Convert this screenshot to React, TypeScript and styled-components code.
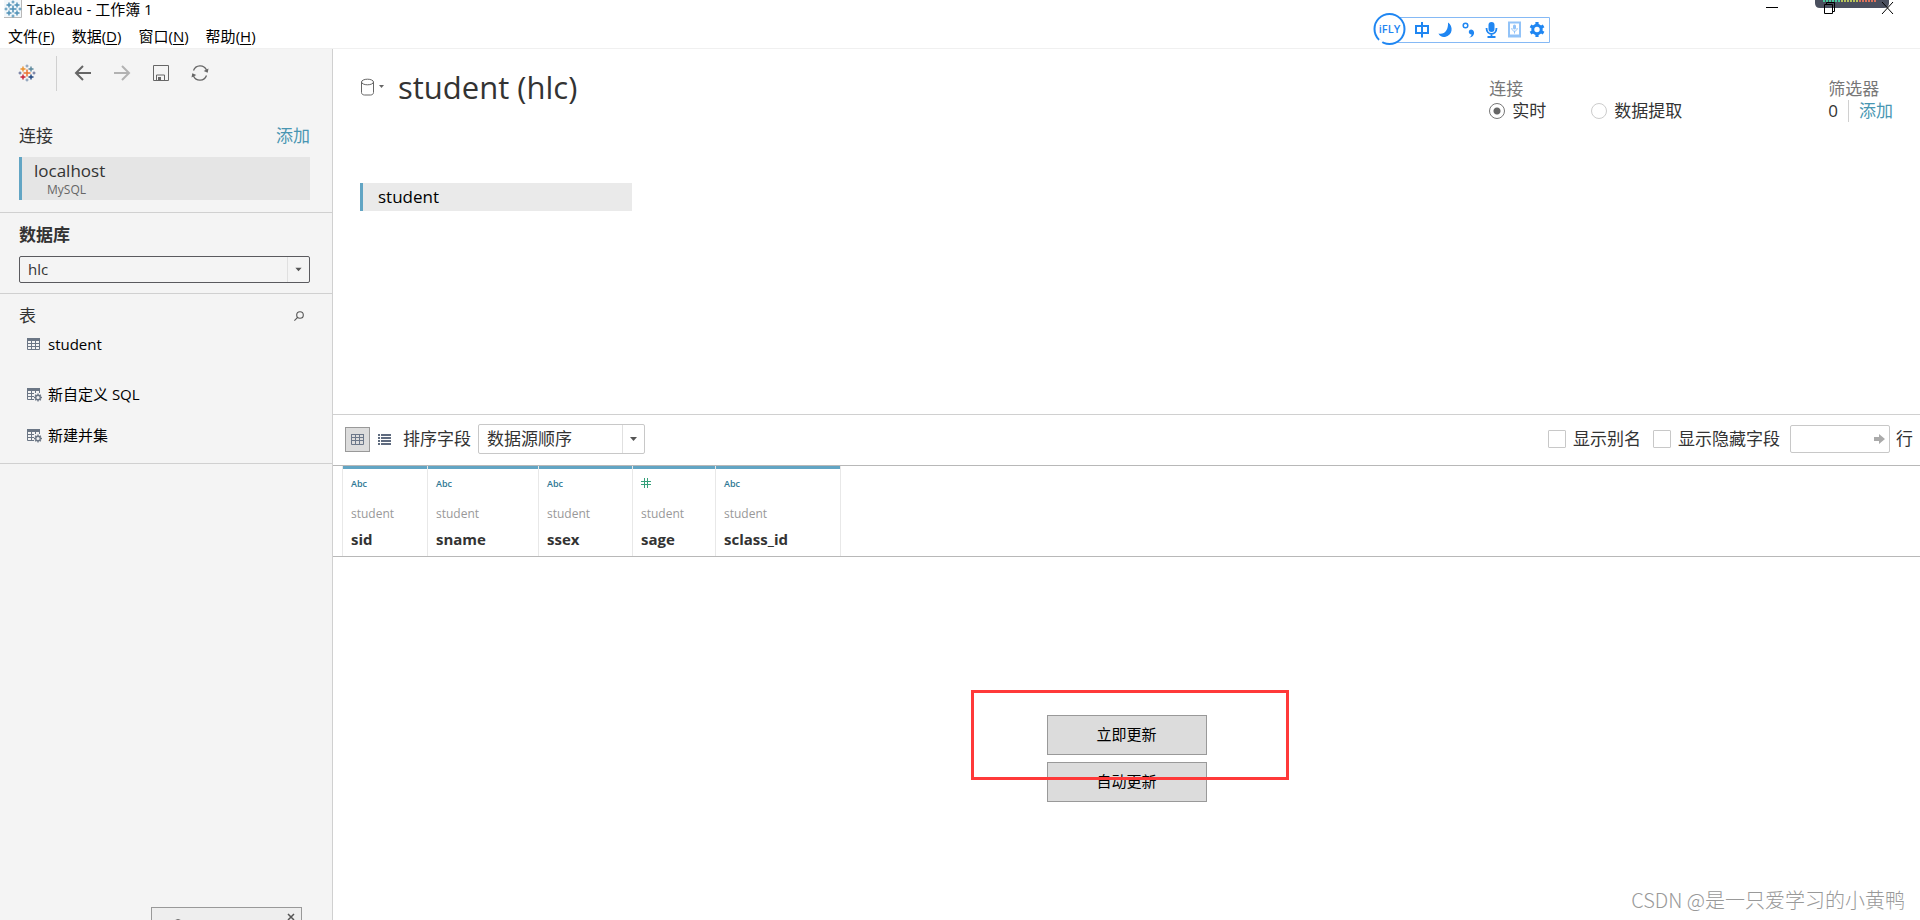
import React from "react";
import styled, { createGlobalStyle } from "styled-components";

const accent = "#62a5c4";
const link = "#4996b2";
const line = "#d0d0d0";
const ink = "#333";

const GlobalStyle = createGlobalStyle`
  *, *::before, *::after { box-sizing: border-box; }
  body {
    margin: 0;
    background: #fff;
    color: ${ink};
    font-family: "Open Sans", "Noto Sans CJK SC", sans-serif;
    font-size: 16px;
    line-height: 24px;
  }
  button, input, select { font: inherit; color: inherit; margin: 0; }
  button { padding: 0; border: 0; background: none; }
  h1, h2, p { margin: 0; font-weight: 400; }
  a { color: ${link}; text-decoration: none; }
  svg { display: block; flex: none; }
`;

const Page = styled.div`
  height: 100vh;
  display: flex;
  flex-direction: column;
  overflow: hidden;
`;

const WindowHeader = styled.header`
  position: relative;
  flex: none;
  height: 49px;
  border-bottom: 1px solid #f0f0f0;
  color: #000;
`;

const TitleRow = styled.div`
  display: flex;
  align-items: center;
  gap: 5px;
  height: 17px;
  padding-left: 4px;
  font-size: 15px;
  line-height: 16px;
`;

const MenuBar = styled.nav`
  display: flex;
  gap: 17px;
  height: 30px;
  padding: 8px 8px 0;
  font-size: 15px;
  line-height: 22px;
  button { height: 22px; }
  u { text-underline-offset: 2px; }
`;

const WindowControls = styled.div`
  position: absolute;
  top: 0;
  right: 26px;
  display: flex;
  gap: 45px;
`;

const HiddenWidget = styled.div`
  position: absolute;
  top: 0;
  right: 31px;
`;

const ImeBar = styled.div`
  position: absolute;
  top: 12px;
  right: 369px;
`;

const Workspace = styled.div`
  flex: 1;
  min-height: 0;
  display: flex;
`;

const Sidebar = styled.aside`
  position: relative;
  flex: none;
  width: 333px;
  background: #f4f4f4;
  border-right: 1px solid ${line};
`;

const Toolbar = styled.div`
  display: flex;
  align-items: center;
  gap: 21px;
  height: 64px;
  padding: 0 18px 16px;
  button { height: 18px; }
`;

const StartPage = styled.div`
  display: flex;
  align-items: center;
  width: 39px;
  height: 35px;
  margin-right: -4px;
  border-right: 1px solid ${line};
`;

const Separator = styled.i`
  width: 1px;
  height: 22px;
  background: ${line};
`;

const Section = styled.section<{ $top: number; $bottom: number }>`
  padding: ${(p) => p.$top}px 22px ${(p) => p.$bottom}px 19px;
  border-bottom: 1px solid ${line};
`;

const SectionHead = styled.div<{ $inset?: boolean }>`
  display: flex;
  justify-content: space-between;
  align-items: center;
  height: 24px;
  padding-right: ${(p) => (p.$inset ? 6 : 0)}px;
  font-size: 17px;
`;

const SectionTitle = styled.h2<{ $bold?: boolean }>`
  font-size: 17px;
  font-weight: ${(p) => (p.$bold ? 700 : 400)};
`;

const Connection = styled.button`
  display: block;
  width: 100%;
  height: 43px;
  margin-top: 9px;
  padding: 0 0 3px 12px;
  text-align: left;
  background: #e5e5e5;
  border-left: 3px solid ${accent};
  font-size: 17px;
  line-height: 26px;
  small {
    display: block;
    padding-left: 13px;
    color: #666;
    font-size: 12px;
    line-height: 12px;
  }
`;

const SelectBox = styled.div<{ $dark?: boolean }>`
  display: flex;
  position: relative;
  width: ${(p) => (p.$dark ? "100%" : "167px")};
  height: ${(p) => (p.$dark ? 27 : 30)}px;
  margin-top: ${(p) => (p.$dark ? 9 : 0)}px;
  border: 1px solid ${(p) => (p.$dark ? "#5a5a5e" : "#c8c8c8")};
  border-radius: 2px;
  font-size: ${(p) => (p.$dark ? 15 : 17)}px;
  select {
    appearance: none;
    width: 100%;
    padding: 0 24px 1px 8px;
    border: 0;
    background: none;
    outline: 0;
  }
  svg {
    position: absolute;
    right: 0;
    top: 0;
    height: 100%;
    width: 22px;
    border-left: 1px solid #e0e0e0;
    pointer-events: none;
  }
`;

const TableItem = styled.button<{ $gap: number }>`
  display: flex;
  align-items: center;
  gap: 6px;
  height: 24px;
  margin: ${(p) => p.$gap}px 0 0 8px;
  color: #000;
  font-size: 15px;
`;

const Popup = styled.div`
  position: absolute;
  left: 151px;
  bottom: -20px;
  width: 151px;
  height: 33px;
  border: 1px solid #999;
  background: #eee;
  display: flex;
  justify-content: space-between;
  padding: 5px 6px 0 22px;
  button { height: 8px; }
`;

const Main = styled.main`
  flex: 1;
  min-width: 0;
  display: flex;
  flex-direction: column;
`;

const Canvas = styled.section`
  flex: none;
  height: 366px;
  padding: 17px 27px 0;
  border-bottom: 1px solid ${line};
`;

const SourceHead = styled.div`
  display: flex;
  align-items: flex-start;
  height: 117px;
`;

const SourceMenu = styled.button`
  margin: 12px 12px 0 0;
`;

const SourceTitle = styled.h1`
  flex: 1;
  font-size: 31px;
  line-height: 43px;
`;

const Options = styled.div<{ $end: number }>`
  display: flex;
  flex-direction: column;
  margin: 12px ${(p) => p.$end}px 0 0;
  font-size: 17px;
  line-height: 22px;
`;

const Caption = styled.span`
  color: #777;
`;

const OptionRow = styled.div<{ $gap: number }>`
  display: flex;
  align-items: center;
  gap: ${(p) => p.$gap}px;
`;

const Choice = styled.label`
  display: flex;
  align-items: center;
  gap: 7px;
`;

const Radio = styled.input.attrs({ type: "radio" })`
  appearance: none;
  width: 16px;
  height: 16px;
  border: 1px solid #ccc;
  border-radius: 50%;
  background: #fff;
  &:checked {
    border-color: #777;
    background: radial-gradient(circle, #666 3px, #fff 4px);
  }
`;

const Check = styled.input.attrs({ type: "checkbox" })`
  appearance: none;
  width: 18px;
  height: 18px;
  border: 1px solid #c8c8c8;
  border-radius: 1px;
  background: #fff;
`;

const TableNode = styled.button`
  width: 272px;
  height: 28px;
  padding-left: 15px;
  text-align: left;
  color: #000;
  background: #eaeaea;
  border-left: 3px solid ${accent};
  font-size: 17px;
`;

const GridToolbar = styled.div`
  flex: none;
  display: flex;
  align-items: center;
  height: 51px;
  padding: 0 7px 2px 12px;
  border-bottom: 1px solid #b8b8b8;
  font-size: 17px;
`;

const ViewButton = styled.button<{ $on?: boolean }>`
  display: grid;
  place-items: center;
  width: 25px;
  height: 25px;
  margin-right: ${(p) => (p.$on ? 2 : 6)}px;
  border: 1px solid ${(p) => (p.$on ? "#999" : "transparent")};
  background: ${(p) => (p.$on ? "#dcdcdc" : "transparent")};
`;

const SortLabel = styled.label`
  display: flex;
  align-items: center;
  gap: 7px;
  margin-right: auto;
`;

const CheckGroup = styled.div`
  display: flex;
  gap: 12px;
  margin-right: 10px;
`;

const RowCount = styled.label`
  display: flex;
  align-items: center;
  gap: 6px;
`;

const RowBox = styled.span`
  display: flex;
  align-items: center;
  width: 100px;
  height: 28px;
  padding-right: 4px;
  border: 1px solid #c8c8c8;
  border-radius: 2px;
  input {
    flex: 1;
    min-width: 0;
    height: 24px;
    padding: 0 6px;
    border: 0;
    outline: 0;
    background: none;
  }
`;

const GridHead = styled.div`
  flex: none;
  height: 91px;
  padding-left: 9px;
  border-bottom: 1px solid #b8b8b8;
`;

const FieldTable = styled.table`
  border-collapse: separate;
  border-spacing: 0;
  table-layout: fixed;
  width: 499px;
  height: 90px;
  border-left: 1px solid #e8e8e8;
`;

const Field = styled.th<{ $width: number }>`
  width: ${(p) => p.$width}px;
  padding: 0 0 0 8px;
  vertical-align: top;
  text-align: left;
  font-weight: 400;
  border-right: 1px solid #e8e8e8;
  background: linear-gradient(${accent}, ${accent}) 0 0 / 100% 3px no-repeat;
`;

const FieldType = styled.div`
  height: 36px;
  padding-top: 11px;
  color: #2f7894;
  font-size: 9px;
  font-weight: 600;
  line-height: 13px;
  svg { margin-top: 1px; }
`;

const FieldSource = styled.div`
  height: 24px;
  color: #999;
  font-size: 12px;
`;

const FieldName = styled.div`
  height: 28px;
  font-size: 15px;
  font-weight: 700;
  line-height: 26px;
`;

const Preview = styled.section`
  flex: 1;
  display: flex;
  flex-direction: column;
  align-items: center;
  padding-top: 133px;
`;

const Updates = styled.div`
  position: relative;
  width: 318px;
  display: flex;
  flex-direction: column;
  align-items: center;
  gap: 7px;
  padding-top: 25px;
`;

const UpdateButton = styled.button`
  width: 160px;
  height: 40px;
  padding-bottom: 2px;
  color: #000;
  background: #dcdcdc;
  border: 1px solid #999;
  font-size: 15px;
`;

const Highlight = styled.div`
  position: absolute;
  top: 0;
  left: 3px;
  width: 100%;
  height: 90px;
  border: 3px solid #ff3939;
  pointer-events: none;
`;

const Watermark = styled.p`
  position: absolute;
  right: 15px;
  bottom: 5px;
  color: #999;
  font-family: "Noto Sans CJK SC", sans-serif;
  font-size: 20px;
  font-weight: 300;
  line-height: 30px;
`;

function TableauLogo({ mono }: { mono?: boolean }) {
  const c = (v: string) => (mono ? "#4d8fb5" : v);
  return (
    <svg width="18" height="18" viewBox="0 0 18 18" fill="none" aria-hidden="true">
      {mono && <path d="M0 0h18v18H0z" fill="#f2f7fa" />}
      {mono && <path d="M0 17.500h17.500V0" stroke="#b8b8b8" />}
      <path d="M9 5.500v7M5.500 9h7" stroke={c("#eb7331")} strokeWidth="1.500" />
      <path d="M5 2.500v5M2.500 5h5" stroke={c("#eb912c")} strokeWidth="1.400" />
      <path d="M13 2.500v5M10.500 5h5" stroke={c("#59879b")} strokeWidth="1.400" />
      <path d="M5 10.500v5M2.500 13h5" stroke={c("#c72037")} strokeWidth="1.400" />
      <path d="M13 10.500v5M10.500 13h5" stroke={c("#1f447e")} strokeWidth="1.400" />
      <path d="M9 .5v3M7.500 2h3M9 14.500v3M7.500 16h3" stroke={c("#7b92b0")} />
      <path d="M2 7.500v3M.5 9h3M16 7.500v3M14.500 9h3" stroke={c("#5b6591")} />
    </svg>
  );
}

const Arrow = ({ forward }: { forward?: boolean }) => (
  <svg width="18" height="18" viewBox="0 0 18 18" fill="none" stroke={forward ? "#b2b2b2" : "#666"} strokeWidth="2">
    <path d={forward ? "M1 9h15M9 2l7 7-7 7" : "M17 9H2M9 2L2 9l7 7"} />
  </svg>
);

const SaveIcon = () => (
  <svg width="18" height="18" viewBox="0 0 18 18" fill="none" stroke="#666">
    <path d="M1.500 1.500h15v15h-15zM4.500 16v-5h8v5" />
    <path d="M6 13h3v3H6z" fill="#666" stroke="none" />
  </svg>
);

const RefreshIcon = () => (
  <svg width="18" height="18" viewBox="0 0 18 18" fill="none" stroke="#666" strokeWidth="1.300">
    <path d="M2.500 6.500A7 7 0 0 1 15.500 6M15.500 11.500A7 7 0 0 1 2.500 12" />
    <path d="M17.500 4.500l-.8 4.200-4-1.700zM.5 13.500l.8-4.200 4 1.700z" fill="#666" stroke="none" />
  </svg>
);

const SearchIcon = () => (
  <svg width="10" height="10" viewBox="0 0 10 10" fill="none" stroke="#555" strokeWidth="1.100">
    <circle cx="6" cy="4" r="3.300" />
    <path d="M3.600 6.300L.4 9.600" />
  </svg>
);

function TableIcon({ gear }: { gear?: boolean }) {
  return (
    <svg width="15" height="15" viewBox="0 0 15 15" fill="none">
      <path d="M0 1h13v3H0z" fill="#6b7685" />
      <path d="M.5 1.500h12v11H.5zM0 6.500h13M0 9.500h13M4.500 4v9M8.500 4v9" stroke="#6b7685" />
      {gear && (
        <>
          <path d="M7 6h8v9H7z" fill="#f4f4f4" />
          <circle cx="11" cy="10.500" r="2.300" stroke="#6b7685" strokeWidth="1.400" />
          <path d="M11 6.500v1.600M11 13v1.600M7 10.500h1.500M13.500 10.500H15M8.200 7.700l1 1M12.800 12.300l1 1M13.800 7.700l-1 1M9.200 12.300l-1 1" stroke="#6b7685" strokeWidth="1.300" />
        </>
      )}
    </svg>
  );
}

const GridIcon = () => (
  <svg width="13" height="11" viewBox="0 0 13 11" fill="none" stroke="#6b7789">
    <path d="M.5.5h12v10H.5zM0 3.500h13M0 6.500h13M4.500 0v11M8.500 0v11" />
    <path d="M0 .5h13" />
  </svg>
);

const ListIcon = () => (
  <svg width="13" height="11" viewBox="0 0 13 11" fill="#5f6b7f">
    <path d="M0 0h2v2H0zM3 0h10v2H3zM0 3h2v2H0zM3 3h10v2H3zM0 6h2v2H0zM3 6h10v2H3zM0 9h2v2H0zM3 9h10v2H3z" />
  </svg>
);

const Caret = () => (
  <svg viewBox="0 0 21 28" aria-hidden="true">
    <path d="M7 12h7l-3.500 4z" fill="#555" />
  </svg>
);

const DatabaseIcon = () => (
  <svg width="26" height="18" viewBox="0 0 26 18" fill="none" stroke="#666">
    <ellipse cx="7.500" cy="4" rx="6" ry="2.800" />
    <path d="M1.500 4v10.500c0 1.200 1 2.500 3 2.500h6c2 0 3-1.300 3-2.500V4" />
    <path d="M19 7h5l-2.500 3z" fill="#666" stroke="none" />
  </svg>
);

function ImeIcons() {
  return (
    <svg width="178" height="34" viewBox="0 0 178 34" fill="none" role="img" aria-label="iFLY">
      <path d="M20 5.500h156.500v25H20z" fill="#fff" stroke="#85b9f5" />
      <circle cx="16.500" cy="17" r="15" fill="#fff" stroke="#1f86f2" strokeWidth="2" />
      <path d="M6 28l3 2.500" stroke="#fff" strokeWidth="3" />
      <text x="16.500" y="21" textAnchor="middle" fontFamily="Open Sans" fontSize="11" fontWeight="600" fill="#1f86f2">iFLY</text>
      <path d="M43 14h12v7H43zM49 10v15.500" stroke="#1f86f2" strokeWidth="2" />
      <path d="M75 10.500c5.500 3.500 5 13-3 14.500-3 .5-5.500-1-6.500-3.500 6 1.500 10-3.500 9.500-11z" fill="#1f86f2" />
      <circle cx="92.500" cy="13.500" r="2.300" stroke="#1f86f2" strokeWidth="1.500" />
      <path d="M100 18.200c-3.500-2.500-6 2.500-2.500 4l1 .2c0 1.300-1 2.300-2.500 3.100 4.500 0 6.500-4.800 4-7.300z" fill="#1f86f2" />
      <rect x="115.500" y="10" width="6" height="10" rx="3" fill="#1f86f2" />
      <path d="M113.500 16c0 8 10 8 10 0M118.500 21v4M114.500 25h8" stroke="#1f86f2" strokeWidth="1.800" />
      <rect x="136" y="10.500" width="11" height="14" stroke="#92c3f8" strokeWidth="2" />
      <rect x="140" y="12.500" width="3" height="5" rx="1.500" fill="#92c3f8" />
      <path d="M138.800 16c0 4.200 5.400 4.200 5.400 0M141.500 19v2.500" stroke="#92c3f8" />
      <path d="M136 23.500h11" stroke="#92c3f8" strokeWidth="2" />
      <circle cx="164" cy="17.500" r="4.200" stroke="#1f86f2" strokeWidth="3" />
      <path d="M164 10v3M164 22v3M157.500 13.800l2.600 1.500M168 19.700l2.600 1.500M157.500 21.200l2.600-1.500M168 15.300l2.600-1.500" stroke="#1f86f2" strokeWidth="3.200" />
    </svg>
  );
}

const menus = [
  ["文件", "F"],
  ["数据", "D"],
  ["窗口", "N"],
  ["帮助", "H"],
];

const fields = [
  { name: "sid", width: 85 },
  { name: "sname", width: 111 },
  { name: "ssex", width: 94 },
  { name: "sage", width: 83, numeric: true },
  { name: "sclass_id", width: 125 },
];

export default function App() {
  return (
    <>
      <GlobalStyle />
      <Page>
        <WindowHeader>
          <TitleRow>
            <TableauLogo mono />
            <span>Tableau - 工作簿 1</span>
          </TitleRow>
          <MenuBar>
            {menus.map(([label, key]) => (
              <button key={key} type="button">
                {label}(<u>{key}</u>)
              </button>
            ))}
          </MenuBar>
          <ImeBar>
            <ImeIcons />
          </ImeBar>
          <HiddenWidget>
            <svg width="74" height="8" viewBox="0 0 74 8">
              <path d="M0 0h74v3q0 5-5 5H5q-5 0-5-5z" fill="#4a4f5e" />
              <path d="M8 1h18" stroke="#45c79b" strokeWidth="2" strokeDasharray="2 1" />
              <path d="M26 1h17" stroke="#b5c25a" strokeWidth="2" strokeDasharray="2 1" />
              <path d="M44 1h17" stroke="#d9705a" strokeWidth="2" strokeDasharray="2 1" />
            </svg>
          </HiddenWidget>
          <WindowControls>
            <button type="button" aria-label="最小化">
              <svg width="13" height="15" stroke="#000"><path d="M1 7.500h12" /></svg>
            </button>
            <button type="button" aria-label="还原">
              <svg width="13" height="15" stroke="#000" fill="none"><path d="M1.500 4.500h8v9h-8zM3.500 4V2.500h8v9H10" /></svg>
            </button>
            <button type="button" aria-label="关闭">
              <svg width="13" height="15" stroke="#000"><path d="M1 2l11 12M12 2L1 14" /></svg>
            </button>
          </WindowControls>
        </WindowHeader>
        <Workspace>
          <Sidebar>
            <Toolbar>
              <StartPage><TableauLogo /></StartPage>
              <button type="button" aria-label="后退"><Arrow /></button>
              <button type="button" aria-label="前进"><Arrow forward /></button>
              <button type="button" aria-label="保存"><SaveIcon /></button>
              <button type="button" aria-label="刷新"><RefreshIcon /></button>
            </Toolbar>
            <Section $top={11} $bottom={12}>
              <SectionHead>
                <SectionTitle>连接</SectionTitle>
                <a href="#add-connection">添加</a>
              </SectionHead>
              <Connection type="button">
                localhost
                <small>MySQL</small>
              </Connection>
            </Section>
            <Section $top={10} $bottom={10}>
              <SectionTitle $bold>
                <label htmlFor="database">数据库</label>
              </SectionTitle>
              <SelectBox $dark>
                <select id="database"><option>hlc</option></select>
                <Caret />
              </SelectBox>
            </Section>
            <Section $top={10} $bottom={16}>
              <SectionHead $inset>
                <SectionTitle>表</SectionTitle>
                <button type="button" aria-label="搜索"><SearchIcon /></button>
              </SectionHead>
              <TableItem type="button" $gap={4}><TableIcon />student</TableItem>
              <TableItem type="button" $gap={26}><TableIcon gear />新自定义 SQL</TableItem>
              <TableItem type="button" $gap={17}><TableIcon gear />新建并集</TableItem>
            </Section>
            <Popup>
              <svg width="10" height="14" fill="none" stroke="#666"><circle cx="4" cy="10" r="3.500" /></svg>
              <button type="button" aria-label="关闭提示">
                <svg width="8" height="8" stroke="#555" strokeWidth="1.500"><path d="M1 1l6 6M7 1L1 7" /></svg>
              </button>
            </Popup>
          </Sidebar>
          <Main>
            <Canvas>
              <SourceHead>
                <SourceMenu type="button" aria-label="数据源"><DatabaseIcon /></SourceMenu>
                <SourceTitle>student (hlc)</SourceTitle>
                <Options $end={146}>
                  <Caption>连接</Caption>
                  <OptionRow $gap={45}>
                    <Choice><Radio name="mode" defaultChecked />实时</Choice>
                    <Choice><Radio name="mode" />数据提取</Choice>
                  </OptionRow>
                </Options>
                <Options $end={0}>
                  <Caption>筛选器</Caption>
                  <OptionRow $gap={10}>
                    <span>0</span>
                    <Separator />
                    <a href="#add-filter">添加</a>
                  </OptionRow>
                </Options>
              </SourceHead>
              <TableNode type="button">student</TableNode>
            </Canvas>
            <GridToolbar>
              <ViewButton type="button" $on aria-label="网格视图"><GridIcon /></ViewButton>
              <ViewButton type="button" aria-label="列表视图"><ListIcon /></ViewButton>
              <SortLabel>
                排序字段
                <SelectBox>
                  <select><option>数据源顺序</option></select>
                  <Caret />
                </SelectBox>
              </SortLabel>
              <CheckGroup>
                <Choice><Check />显示别名</Choice>
                <Choice><Check />显示隐藏字段</Choice>
              </CheckGroup>
              <RowCount>
                <RowBox>
                  <input type="text" />
                  <svg width="11" height="10" fill="#aaa"><path d="M0 3h5V0l6 5-6 5V7H0z" /></svg>
                </RowBox>
                行
              </RowCount>
            </GridToolbar>
            <GridHead>
              <FieldTable>
                <thead>
                  <tr>
                    {fields.map((f) => (
                      <Field key={f.name} $width={f.width} scope="col">
                        <FieldType>
                          {f.numeric ? (
                            <svg width="10" height="10" stroke="#35a07a" fill="none"><path d="M3.500 0v10M6.500 0v10M0 3.500h10M0 6.500h10" /></svg>
                          ) : (
                            "Abc"
                          )}
                        </FieldType>
                        <FieldSource>student</FieldSource>
                        <FieldName>{f.name}</FieldName>
                      </Field>
                    ))}
                  </tr>
                </thead>
              </FieldTable>
            </GridHead>
            <Preview>
              <Updates>
                <UpdateButton type="button">立即更新</UpdateButton>
                <UpdateButton type="button">自动更新</UpdateButton>
                <Highlight />
              </Updates>
            </Preview>
          </Main>
        </Workspace>
        <Watermark>CSDN @是一只爱学习的小黄鸭</Watermark>
      </Page>
    </>
  );
}
